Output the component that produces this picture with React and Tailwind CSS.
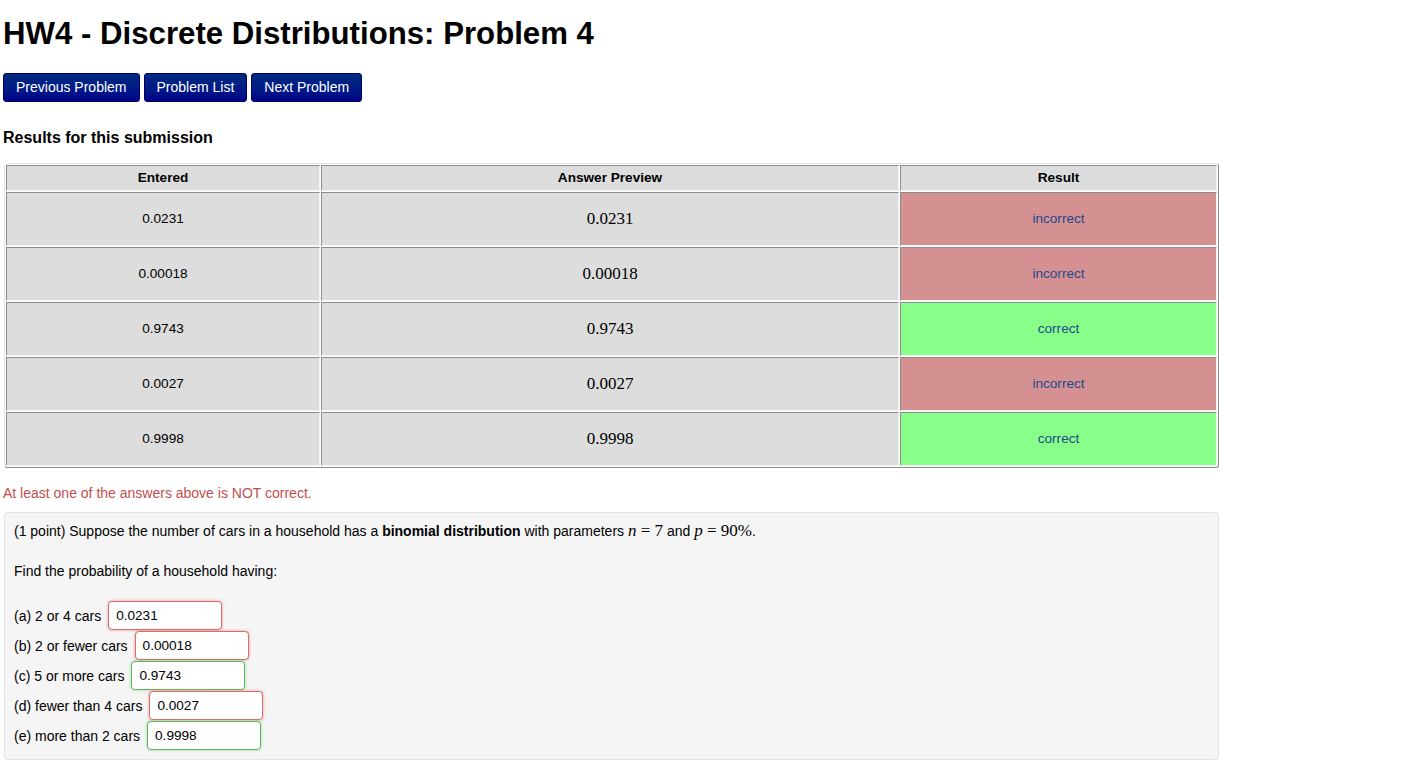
import React from 'react';

const rows = [
    { entered: '0.0231', ok: false },
    { entered: '0.00018', ok: false },
    { entered: '0.9743', ok: true },
    { entered: '0.0027', ok: false },
    { entered: '0.9998', ok: true },
];

const parts = [
    { label: '(a) 2 or 4 cars', value: '0.0231', ok: false },
    { label: '(b) 2 or fewer cars', value: '0.00018', ok: false },
    { label: '(c) 5 or more cars', value: '0.9743', ok: true },
    { label: '(d) fewer than 4 cars', value: '0.0027', ok: false },
    { label: '(e) more than 2 cars', value: '0.9998', ok: true },
];

const cell = "border border-t-[#8c8c8c] border-l-[#8c8c8c] border-b-[#f4f4f4] border-r-[#f4f4f4] text-center p-0";
const mathFont = "font-['Liberation_Serif','Times_New_Roman',serif] text-[17px]";

export default function App() {
    return (
        <div className="min-h-screen bg-white text-black font-['Liberation_Sans',Arial,sans-serif] pl-[3px] pt-[13px]">
            <h1 className="text-[31.2px] font-bold leading-[42px]">HW4 - Discrete Distributions: Problem 4</h1>

            <div className="flex gap-[4px] mt-[18px]">
                {['Previous Problem', 'Problem List', 'Next Problem'].map(b => (
                    <button key={b} className="h-[29px] px-[12px] rounded-[3px] text-white text-[14px] bg-gradient-to-b from-[#002a80] to-[#00008a] border border-[#000066]">{b}</button>
                ))}
            </div>

            <h3 className="text-[16px] font-bold mt-[26px] leading-[20px]">Results for this submission</h3>

            <table className="mt-[15px] ml-[1px] border-separate border-spacing-[1px] border border-t-[#e6e6e6] border-l-[#e6e6e6] border-b-[#8c8c8c] border-r-[#8c8c8c] rounded-[3px] text-[13.6px]" style={{ width: 1215 }}>
                <thead>
                    <tr className="bg-[#dddddd] h-[26px]">
                        <th className={cell + " w-[314px] font-bold"}>Entered</th>
                        <th className={cell + " w-[578px] font-bold"}>Answer Preview</th>
                        <th className={cell + " font-bold"}>Result</th>
                    </tr>
                </thead>
                <tbody>
                    {rows.map((r, i) => (
                        <tr key={i} className="h-[54px]">
                            <td className={cell + " bg-[#dddddd]"}>{r.entered}</td>
                            <td className={cell + " bg-[#dddddd] " + mathFont}>{r.entered}</td>
                            <td className={cell + " text-[#1d4a8c] " + (r.ok ? 'bg-[#88ff88]' : 'bg-[#d59191]')}>{r.ok ? 'correct' : 'incorrect'}</td>
                        </tr>
                    ))}
                </tbody>
            </table>

            <p className="text-[14px] text-[#c24e4e] mt-[16px] leading-[18px]">At least one of the answers above is NOT correct.</p>

            <div className="mt-[10px] ml-[1px] w-[1215px] bg-[#f5f5f5] border border-[#e3e3e3] rounded-[4px] px-[9px] pt-[8px] pb-[9px] text-[14px] leading-[20px]">
                <p>
                    (1 point) Suppose the number of cars in a household has a <b>binomial distribution</b> with parameters{' '}
                    <span className={mathFont}><i>n</i> = 7</span> and{' '}
                    <span className={mathFont}><i>p</i> = 90%</span>.
                </p>
                <p className="mt-[20px]">Find the probability of a household having:</p>
                <div className="mt-[20px] flex flex-col gap-[1px]">
                    {parts.map(p => (
                        <div key={p.label} className="flex items-center h-[29px]">
                            <span>{p.label}</span>
                            <div className={"ml-[7px] w-[114px] h-[29px] bg-white rounded-[4px] border flex items-center px-[7px] text-[13.6px] " + (p.ok ? 'border-[#5cb85c] shadow-[0_0_3px_rgba(92,184,92,0.6)]' : 'border-[#d96b6b] shadow-[0_0_3px_rgba(217,83,79,0.6)]')}>
                                {p.value}
                            </div>
                        </div>
                    ))}
                </div>
            </div>
        </div>
    );
}
